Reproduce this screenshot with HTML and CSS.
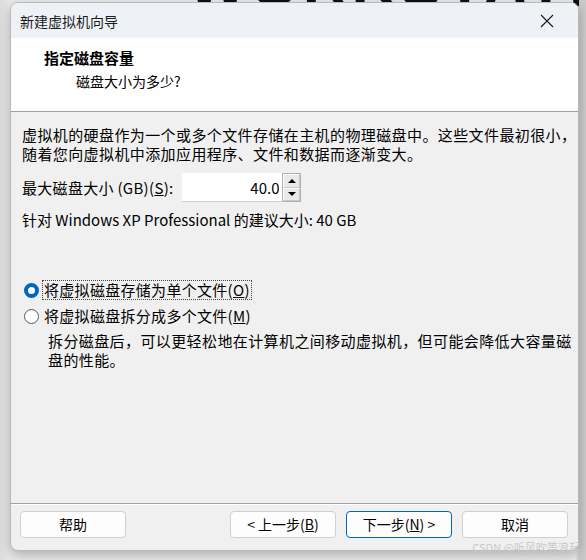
FILE: index.html
```html
<!DOCTYPE html>
<html lang="zh-CN">
  <head>
    <meta charset="UTF-8" />
    <title>新建虚拟机向导</title>
    <link rel="stylesheet" href="styles.css">
  </head>
  <body>
    <div class="desktop">
      <div class="backdrop-title">WORKSTATION PRO</div>
      <div class="backdrop-side"></div>

      <div class="wizard">
        <div class="title-bar">
          <span class="title">新建虚拟机向导</span>
          <span class="close-btn">
            <svg width="14" height="14" viewBox="0 0 14 14">
              <path d="M1 1L13 13M13 1L1 13" stroke="#1a1a1a" stroke-width="1.1" fill="none"></path>
            </svg>
          </span>
        </div>

        <div class="page-header">
          <div class="page-title">指定磁盘容量</div>
          <div class="page-subtitle">磁盘大小为多少?</div>
        </div>

        <div class="page-body">
          <p class="intro">虚拟机的硬盘作为一个或多个文件存储在主机的物理磁盘中。这些文件最初很小，<br />随着您向虚拟机中添加应用程序、文件和数据而逐渐变大。</p>

          <div class="size-row">
            <label for="disk-size">最大磁盘大小 (GB)(<u>S</u>):</label>
            <div class="spin">
              <input id="disk-size" type="text" value="40.0" />
              <div class="spin-buttons">
                <span class="spin-btn"><i class="arrow up"></i></span>
                <span class="spin-btn"><i class="arrow down"></i></span>
              </div>
            </div>
          </div>

          <p class="hint">针对 Windows XP Professional 的建议大小: 40 GB</p>

          <div class="options">
            <div class="radio-row">
              <span class="radio checked"></span>
              <span class="radio-label focused">将虚拟磁盘存储为单个文件(<u>O</u>)</span>
            </div>
            <div class="radio-row">
              <span class="radio"></span>
              <span class="radio-label">将虚拟磁盘拆分成多个文件(<u>M</u>)</span>
            </div>
            <p class="option-note">拆分磁盘后，可以更轻松地在计算机之间移动虚拟机，但可能会降低大容量磁<br />盘的性能。</p>
          </div>
        </div>

        <div class="footer">
          <button class="btn">帮助</button>
          <span class="fill"></span>
          <button class="btn">&lt; 上一步(<u>B</u>)</button>
          <button class="btn primary">下一步(<u>N</u>) &gt;</button>
          <button class="btn">取消</button>
        </div>
      </div>

      <div class="watermark">CSDN @听风吹等浪起</div>
    </div>
  </body>
</html>
```

FILE: styles.css
```css
* {
  box-sizing: border-box;
}

body {
  margin: 0;
  padding: 0;
  background: #e4e4e4;
  font-family: "Noto Sans CJK SC", "Noto Sans", sans-serif;
  font-size: 15px;
  color: #000000;
  overflow: hidden;
}

.desktop {
  position: relative;
  width: 586px;
  height: 560px;
  overflow: hidden;
  background: linear-gradient(to right, #dcdcdc 0, #e9e9e9 10px, #e9e9e9 575px, #c4c4c4 580px, #cfcfcf 586px);
}

/* page behind the dialog, only its lower edge peeks out */
.backdrop-title {
  position: absolute;
  left: 188px;
  top: -46px;
  font-family: "Liberation Sans", sans-serif;
  font-weight: bold;
  font-size: 62px;
  line-height: 62px;
  letter-spacing: 4px;
  color: #111111;
  white-space: nowrap;
}

.backdrop-side {
  position: absolute;
  right: 0;
  top: 0;
  width: 7px;
  height: 560px;
  background: #cacaca;
}

.wizard {
  position: absolute;
  left: 10px;
  top: 2px;
  width: 569px;
  height: 549px;
  display: flex;
  flex-direction: column;
  background: #f0f0f0;
  border: 1px solid #b9b9b9;
  border-radius: 8px;
  overflow: hidden;
  box-shadow: 0 4px 12px rgba(0, 0, 0, 0.25);
}

.title-bar {
  height: 35px;
  flex: none;
  display: flex;
  align-items: center;
  padding: 0 0 0 9px;
  background: #eef2f7;
}

.title {
  flex: 1;
  font-size: 14px;
  color: #1a1a1a;
}

.close-btn {
  width: 46px;
  display: flex;
  justify-content: center;
  align-items: center;
  margin-right: 8px;
}

.page-header {
  height: 74px;
  flex: none;
  background: #ffffff;
  border-bottom: 1px solid #a0a0a0;
  padding: 10px 0 0 33px;
}

.page-title {
  font-weight: bold;
  font-size: 15px;
  line-height: 20px;
}

.page-subtitle {
  margin: 3px 0 0 32px;
  font-size: 14px;
  line-height: 20px;
}

.page-body {
  flex: 1;
  padding: 13px 0 0 11px;
}

.intro {
  margin: 0;
  line-height: 19px;
  letter-spacing: 0.4px;
}

.size-row {
  margin-top: 10px;
  display: flex;
  align-items: center;
  gap: 9px;
}

.size-row label {
  letter-spacing: 0.3px;
}

.spin {
  display: flex;
  align-items: stretch;
  height: 29px;
}

.spin input {
  width: 100px;
  height: 29px;
  margin: 0;
  border: none;
  border-bottom: 1px solid #d0d0d0;
  background: #ffffff;
  font: inherit;
  font-size: 15px;
  text-align: right;
  padding: 0 3px 0 0;
  outline: none;
}

.spin-buttons {
  width: 19px;
  display: flex;
  flex-direction: column;
  border: 1px solid #b0b0b0;
  background: #e9e9e9;
}

.spin-btn {
  flex: 1;
  display: flex;
  justify-content: center;
  align-items: center;
  border: 1px solid #f8f8f8;
  border-color: #fdfdfd #c8c8c8 #c8c8c8 #fdfdfd;
}

.arrow {
  width: 0;
  height: 0;
  border-left: 4px solid transparent;
  border-right: 4px solid transparent;
}

.arrow.up {
  border-bottom: 4px solid #000000;
}

.arrow.down {
  border-top: 4px solid #000000;
}

.hint {
  margin: 8px 0 0 0;
  line-height: 19px;
}

.options {
  margin-top: 48px;
}

.radio-row {
  display: flex;
  align-items: center;
  gap: 3px;
  height: 26px;
  padding-left: 2px;
}

.radio {
  width: 15px;
  height: 15px;
  border-radius: 50%;
  border: 1px solid #5a5a5a;
  background: #ffffff;
}

.radio.checked {
  border: 4px solid #0067c0;
  background: #ffffff;
}

.radio-label {
  padding: 0 1px;
  line-height: 18px;
  border: 1px dotted transparent;
  letter-spacing: 0.3px;
}

.radio-label.focused {
  border-color: #444444;
}

.option-note {
  margin: 2px 0 0 26px;
  line-height: 19px;
  letter-spacing: 0.4px;
}

.footer {
  flex: none;
  height: 47px;
  display: flex;
  align-items: center;
  gap: 10px;
  padding: 0 10px 6px 9px;
  border-top: 1px solid #a0a0a0;
  box-shadow: inset 0 1px 0 #ffffff;
}

.fill {
  flex: 1;
}

.btn {
  width: 106px;
  height: 27px;
  font: inherit;
  font-size: 14px;
  color: #000000;
  background: #fdfdfd;
  border: 1px solid #d0d0d0;
  border-radius: 4px;
  padding: 0;
}

.btn.primary {
  border-color: #0067c0;
}

.watermark {
  position: absolute;
  right: 6px;
  bottom: 5px;
  font-size: 11px;
  color: #c9c9c9;
}
```
